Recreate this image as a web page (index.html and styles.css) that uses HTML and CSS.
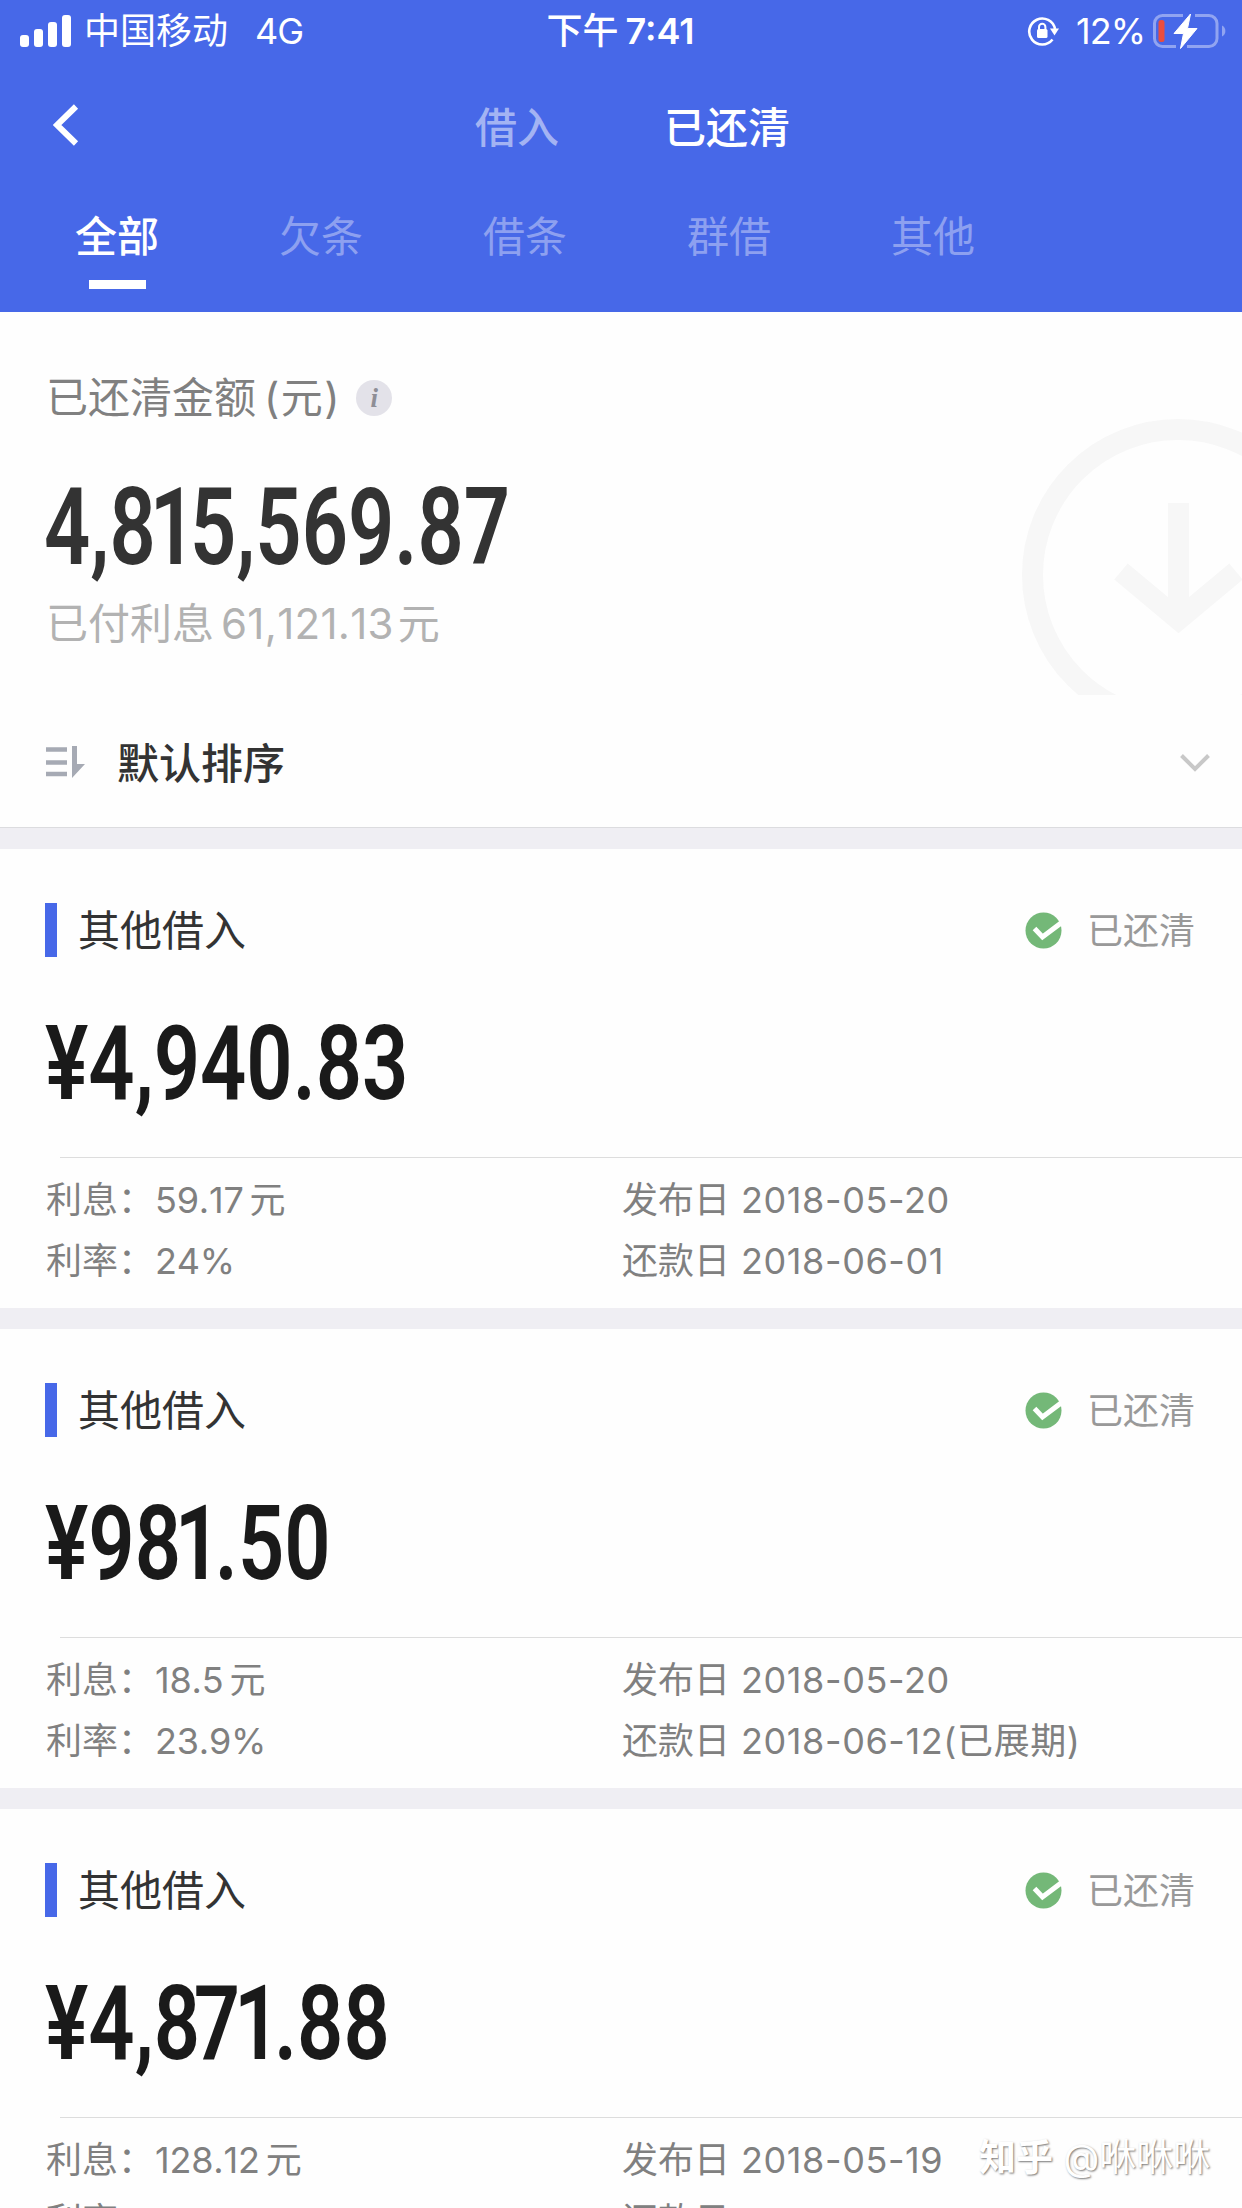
FILE: index.html
```
<!DOCTYPE html>
<html lang="zh-CN">
<head>
    <meta charset="UTF-8">
    <title>已还清</title>
    <link rel="stylesheet" href="styles.css">
</head>
<body>
    <div class="header">
        <div class="status-bar">
            <div class="status-left">
                <svg class="signal" viewBox="0 0 52 32">
                    <rect x="0" y="20" width="9" height="12" rx="3"/>
                    <rect x="14" y="14" width="9" height="18" rx="3"/>
                    <rect x="28" y="7" width="9" height="25" rx="3"/>
                    <rect x="42" y="0" width="9" height="32" rx="3"/>
                </svg>
                <span class="carrier">中国移动</span>
                <span class="network">4G</span>
            </div>
            <div class="status-time">下午<span class="clock">7:41</span></div>
            <div class="status-right">
                <svg class="lock" viewBox="0 0 32 32">
                    <path d="M25.5 24.5A13 13 0 1 1 28 14" fill="none" stroke="#fff" stroke-width="2.6"/>
                    <path d="M23 13.500h9l-4.500 7z" fill="#fff"/>
                    <rect x="10" y="14" width="10.500" height="9" rx="1.500" fill="#fff"/>
                    <path d="M12 14.500v-2.500a3.200 3.200 0 0 1 6.400 0v2.500" fill="none" stroke="#fff" stroke-width="2"/>
                </svg>
                <span class="percent">12%</span>
                <svg class="battery" viewBox="0 0 74 36">
                    <g fill="none" stroke="#91a4f1" stroke-width="3">
                        <path d="M31 2.500H10.500a8 8 0 0 0-8 8v15a8 8 0 0 0 8 8H24"/>
                        <path d="M43 2.500h14a8 8 0 0 1 8 8v15a8 8 0 0 1-8 8H35"/>
                    </g>
                    <path d="M70 12.500c4.500 2 4.500 9 0 11z" fill="#91a4f1"/>
                    <rect x="6.500" y="7" width="6" height="22" rx="2.500" fill="#eb4d3d"/>
                    <path d="M38.500 1 22 20.500h9.500L28.500 35.500 45 15.500h-9.500z" fill="#fff" stroke="#fff" stroke-linejoin="round"/>
                </svg>
            </div>
        </div>
        <div class="title-bar">
            <svg class="back" viewBox="0 0 26 42">
                <path d="M23 2.500 4 21l19 18.500" fill="none" stroke="#fff" stroke-width="6"/>
            </svg>
            <div class="switch">
                <span>借入</span>
                <span class="active">已还清</span>
            </div>
        </div>
        <div class="tabs">
            <span class="tab active">全部</span>
            <span class="tab">欠条</span>
            <span class="tab">借条</span>
            <span class="tab">群借</span>
            <span class="tab">其他</span>
        </div>
    </div>

    <div class="summary">
        <div class="summary-label">
            <span>已还清金额</span>
            <span class="unit">(元)</span>
            <span class="info">i</span>
        </div>
        <div class="amount total">4,<span class="tight">81</span>5,569.87</div>
        <div class="paid">已付利息<span class="num">61,121.13</span>元</div>
        <svg class="deco" viewBox="0 0 220 276">
            <circle cx="156" cy="156" r="145.500"/>
            <path d="M156.500 84v116M99 152.500l57.500 48 57.500-48"/>
        </svg>
    </div>

    <div class="sort">
        <svg class="sort-icon" viewBox="0 0 40 34">
            <path d="M0 4.500h21M0 17.500h21M0 29h21" stroke="#a6aab4" stroke-width="4.500"/>
            <path d="M26 1h5v18h8L26 33z" fill="#a6aab4"/>
        </svg>
        <span class="sort-text">默认排序</span>
        <svg class="arrow-down" viewBox="0 0 30 18">
            <path d="M1.500 1.500 15 15 28.500 1.500" fill="none" stroke="#c8c8c8" stroke-width="4"/>
        </svg>
    </div>

    <div class="card">
        <div class="card-head">
            <span class="card-title">其他借入</span>
            <svg class="check" viewBox="0 0 37 37">
                <circle cx="18.500" cy="18.500" r="18" fill="#74b878"/>
                <path d="m9.500 16.500 8 8.500L36 11" fill="none" stroke="#fff" stroke-width="5"/>
            </svg>
            <span class="state">已还清</span>
        </div>
        <div class="amount">¥4,940.83</div>
        <div class="details">
            <div class="col">
                <div class="row"><span class="key">利息：</span><span class="num">59.17</span>元</div>
                <div class="row"><span class="key">利率：</span><span class="num">24%</span></div>
            </div>
            <div class="col">
                <div class="row"><span class="key">发布日</span><span class="date">2018-05-20</span></div>
                <div class="row"><span class="key">还款日</span><span class="date">2018-06-01</span></div>
            </div>
        </div>
    </div>

    <div class="card">
        <div class="card-head">
            <span class="card-title">其他借入</span>
            <svg class="check" viewBox="0 0 37 37">
                <circle cx="18.500" cy="18.500" r="18" fill="#74b878"/>
                <path d="m9.500 16.500 8 8.500L36 11" fill="none" stroke="#fff" stroke-width="5"/>
            </svg>
            <span class="state">已还清</span>
        </div>
        <div class="amount">¥9<span class="tight">81</span>.50</div>
        <div class="details">
            <div class="col">
                <div class="row"><span class="key">利息：</span><span class="num">18.5</span>元</div>
                <div class="row"><span class="key">利率：</span><span class="num">23.9%</span></div>
            </div>
            <div class="col">
                <div class="row"><span class="key">发布日</span><span class="date">2018-05-20</span></div>
                <div class="row"><span class="key">还款日</span><span class="date">2018-06-12(已展期)</span></div>
            </div>
        </div>
    </div>

    <div class="card">
        <div class="card-head">
            <span class="card-title">其他借入</span>
            <svg class="check" viewBox="0 0 37 37">
                <circle cx="18.500" cy="18.500" r="18" fill="#74b878"/>
                <path d="m9.500 16.500 8 8.500L36 11" fill="none" stroke="#fff" stroke-width="5"/>
            </svg>
            <span class="state">已还清</span>
        </div>
        <div class="amount">¥4,<span class="tight">871</span>.88</div>
        <div class="details">
            <div class="col">
                <div class="row"><span class="key">利息：</span><span class="num">128.12</span>元</div>
                <div class="row"><span class="key">利率：</span></div>
            </div>
            <div class="col">
                <div class="row"><span class="key">发布日</span><span class="date">2018-05-19</span></div>
                <div class="row"><span class="key">还款日</span></div>
            </div>
        </div>
    </div>

    <div class="watermark"><b>知乎</b> @咻咻咻</div>
</body>
</html>
```

FILE: styles.css
```
* {
    box-sizing: border-box;
}

body {
    margin: 0;
    width: 1242px;
    height: 2208px;
    overflow: hidden;
    position: relative;
    font-family: Inter, 'Noto Sans CJK SC', sans-serif;
    background-color: #fefefe;
    color: #333333;
    white-space: nowrap;
}

svg {
    display: block;
    flex: none;
}

/* header */
.header {
    height: 312px;
    background-color: #4768e8;
    color: #ffffff;
}

.status-bar {
    display: grid;
    grid-template-columns: 1fr auto 1fr;
    align-items: center;
    height: 62px;
    padding: 0 16px 0 20px;
    font-size: 36px;
    line-height: 62px;
}

.status-left,
.status-right {
    display: flex;
    align-items: center;
}

.status-right {
    justify-content: flex-end;
}

.signal {
    width: 52px;
    height: 32px;
    fill: #ffffff;
}

.carrier {
    margin-left: 12px;
}

.network {
    margin-left: 27px;
    letter-spacing: -1px;
}

.status-time {
    padding-right: 5px;
    font-weight: 500;
}

.clock {
    margin-left: 7px;
    font-weight: 600;
}

.lock {
    width: 32px;
    height: 32px;
}

.percent {
    margin: 0 7px 0 17px;
    letter-spacing: -1px;
}

.battery {
    width: 74px;
    height: 36px;
}

.title-bar {
    display: flex;
    align-items: center;
    height: 133px;
    padding: 0 0 8px 53px;
}

.back {
    width: 26px;
    height: 42px;
}

.switch {
    display: flex;
    gap: 105px;
    margin-left: 396px;
    font-size: 42px;
    font-weight: 500;
    color: #a3b3f3;
}

.switch .active {
    color: #ffffff;
}

.tabs {
    display: flex;
    padding-left: 15px;
    font-size: 42px;
    line-height: 84px;
    color: #8da0f0;
}

.tab {
    width: 204px;
    text-align: center;
}

.tab.active {
    color: #ffffff;
    font-weight: 500;
}

.tab.active::after {
    content: "";
    display: block;
    width: 57px;
    height: 9px;
    margin: 1px auto 0;
    background-color: #ffffff;
}

/* total */
.summary {
    position: relative;
    height: 383px;
    padding: 60px 0 0 46px;
}

.summary-label {
    display: flex;
    align-items: center;
    height: 52px;
    font-size: 42px;
    line-height: 46px;
    color: #808080;
}

.summary-label span {
    padding-bottom: 1px;
}

.unit {
    margin-left: 8px;
    letter-spacing: 1.5px;
}

.summary-label .info {
    width: 36px;
    height: 36px;
    margin-left: 15px;
    padding: 0;
    border-radius: 50%;
    background-color: #e3e2e9;
    font: italic bold 27px/36px 'Liberation Serif', serif;
    text-align: center;
    color: #8e8e96;
}

.amount {
    height: 110px;
    font-family: Roboto, sans-serif;
    font-size: 104px;
    font-weight: 600;
    line-height: 110px;
    color: #1a1a1a;
    transform: scaleX(0.78);
    transform-origin: 0 50%;
}

/* 1 is set narrower than the other digits */
.tight {
    letter-spacing: -8px;
}

.amount.total {
    margin: 49px 0 0 -2px;
    font-size: 107px;
    color: #333333;
    transform: scaleX(0.758);
}

.paid {
    height: 60px;
    margin-top: 11px;
    font-size: 42px;
    line-height: 60px;
    color: #b2b2b2;
}

.paid .num {
    margin: 0 4px 0 7px;
    letter-spacing: 0.3px;
    font-kerning: none;
}

.deco {
    position: absolute;
    right: 0;
    bottom: 0;
    width: 220px;
    height: 276px;
    fill: none;
    stroke: #f7f7f7;
    stroke-width: 21;
}

.sort {
    display: flex;
    align-items: center;
    height: 133px;
    padding: 4px 32px 0 46px;
    border-bottom: 1px solid #dcdcdf;
    font-size: 42px;
}

.sort-icon {
    width: 40px;
    height: 34px;
    margin-bottom: 2px;
}

.sort-text {
    margin-left: 31px;
    padding-bottom: 5px;
    font-weight: 500;
}

.arrow-down {
    width: 30px;
    height: 18px;
    margin-left: auto;
}

/* list */
.card {
    height: 480px;
    border-top: 21px solid #efeef3;
    padding-top: 54px;
}

.card-head {
    display: flex;
    align-items: center;
    height: 54px;
    padding: 0 47px 0 45px;
}

.card-title {
    flex: 1;
    height: 54px;
    padding-left: 21px;
    border-left: 12px solid #4768e8;
    font-size: 42px;
    line-height: 56px;
}

.check {
    width: 37px;
    height: 37px;
}

.state {
    margin-left: 25px;
    padding-bottom: 4px;
    font-size: 36px;
    color: #999999;
}

.card .amount {
    margin: 52px 0 0 45px;
}

.details {
    display: flex;
    margin: 38px 0 0 60px;
    padding-top: 12px;
    border-top: 1px solid #dddddd;
    font-size: 36px;
    line-height: 61px;
    color: #808080;
}

.col {
    width: 576px;
    margin-left: -14px;
}

.col + .col {
    margin-left: 0;
}

.row {
    display: flex;
}

.key {
    width: 109px;
}

.col + .col .key {
    width: 119px;
}

.num {
    margin-right: 6px;
    letter-spacing: -0.2px;
    font-kerning: none;
}

.date {
    letter-spacing: 0.6px;
}

.watermark {
    position: absolute;
    left: 979px;
    top: 2131px;
    font-size: 37px;
    line-height: 54px;
    color: #ffffff;
    text-shadow: 1px 1px 2px #777777;
}
```
